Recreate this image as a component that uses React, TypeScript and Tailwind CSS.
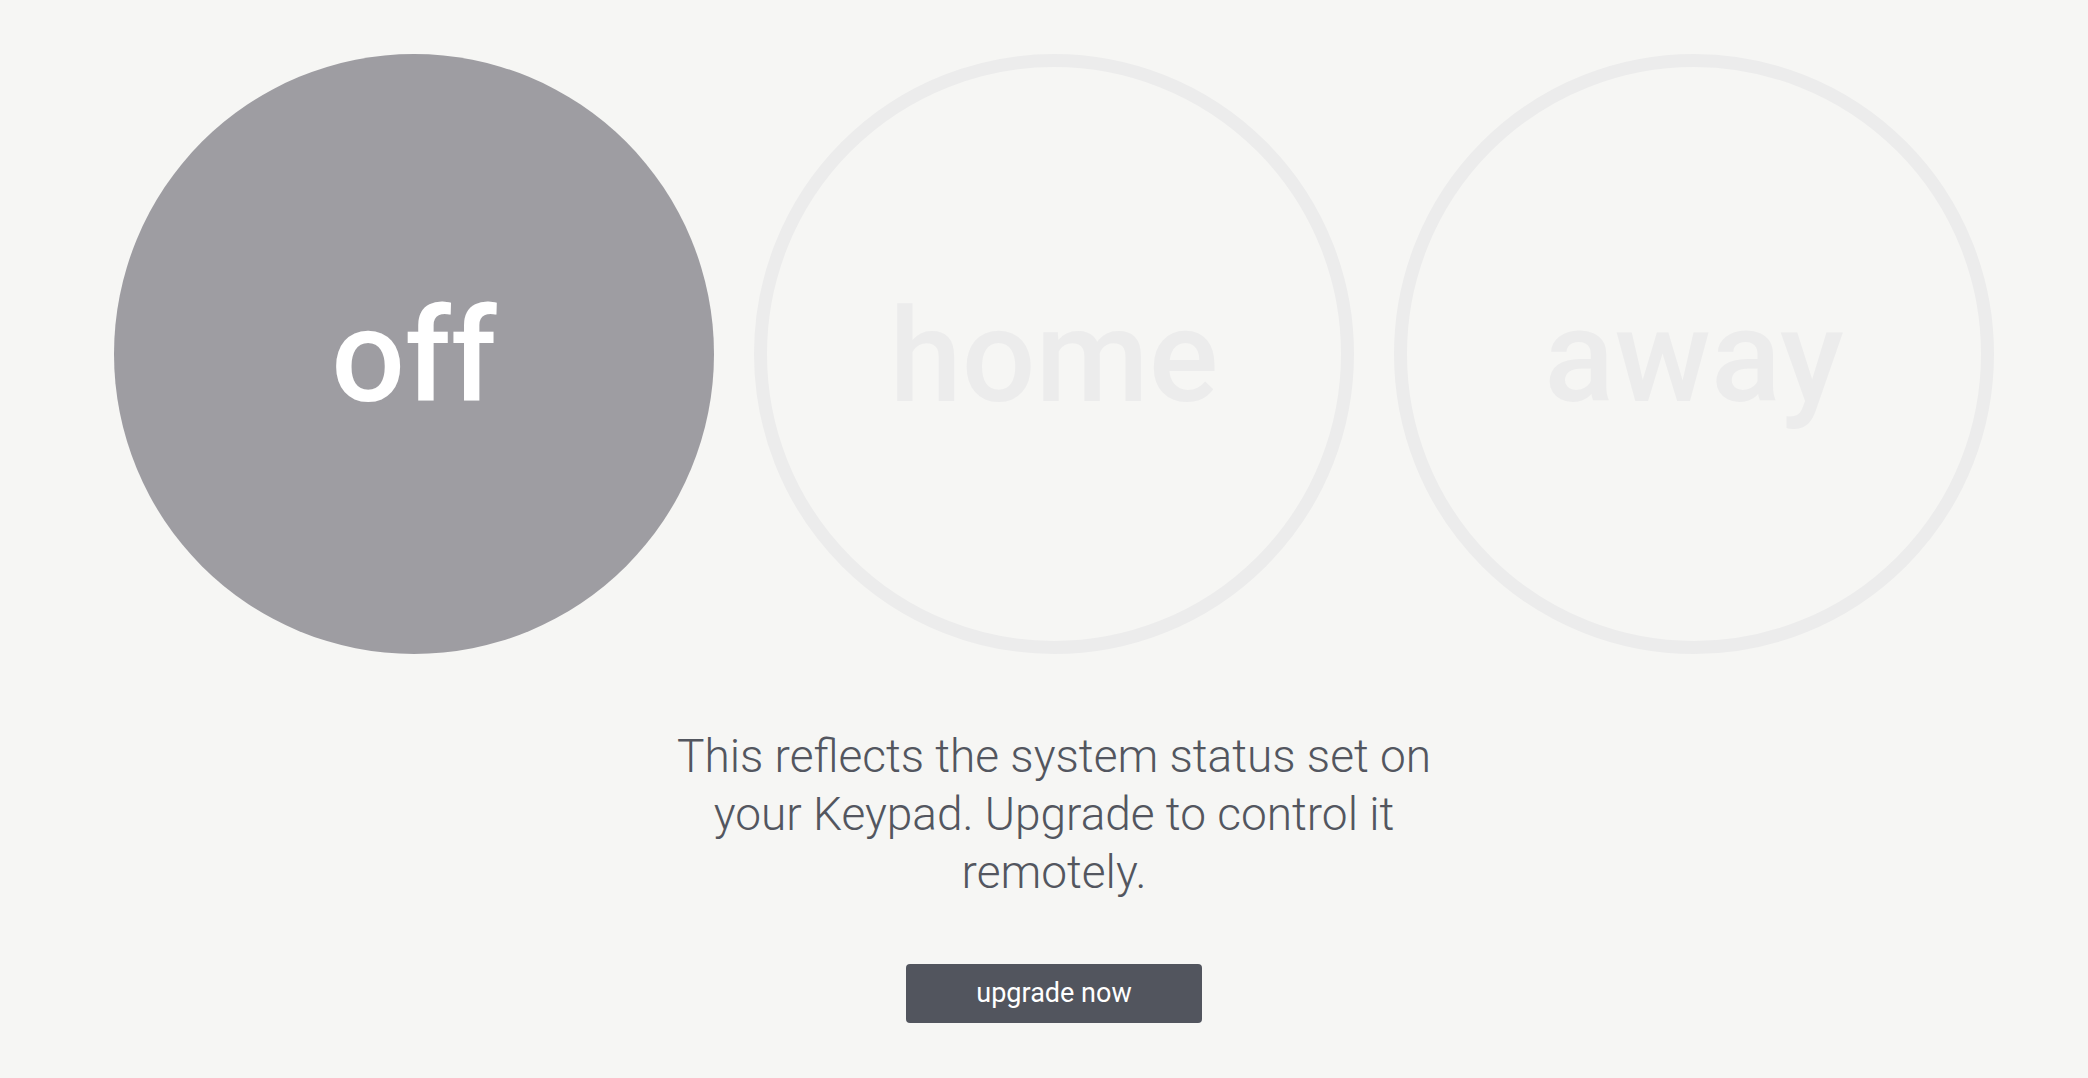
import React from 'react';

const modes = [
  { key: 'off', active: true },
  { key: 'home', active: false },
  { key: 'away', active: false },
];

const App: React.FC = () => {
  return (
    <div
      className="min-h-screen bg-[#f6f6f4] pl-5 pt-[54px] flex flex-col items-center"
      style={{ fontFamily: 'Roboto, "Open Sans", sans-serif' }}
    >
      <div className="flex gap-10">
        {modes.map((m) =>
          m.active ? (
            <div
              key={m.key}
              className="w-[600px] h-[600px] rounded-full bg-[#9e9da2] flex items-center justify-center"
            >
              <span className="text-[130px] leading-none font-medium text-white translate-y-[3px]">{m.key}</span>
            </div>
          ) : (
            <div
              key={m.key}
              className="w-[600px] h-[600px] rounded-full border-[13px] border-[#ececec] flex items-center justify-center"
            >
              <span className="text-[130px] leading-none font-medium text-[#ececec] translate-y-[3px]">{m.key}</span>
            </div>
          )
        )}
      </div>

      <p className="mt-[73px] text-center text-[46px] leading-[58px] font-light text-[#53565f]">
        This reflects the system status set on
        <br />
        your Keypad. Upgrade to control it
        <br />
        remotely.
      </p>

      <button className="mt-[63px] w-[296px] h-[59px] rounded-[4px] bg-[#52555e] text-white text-[27px]">
        upgrade now
      </button>
    </div>
  );
};

export default App;
